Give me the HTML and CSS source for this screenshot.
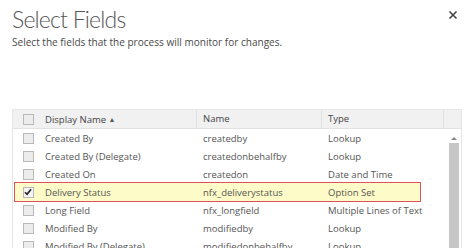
FILE: index.html
```html
<!DOCTYPE html>
<html>
<head>
<meta charset="utf-8">
<link rel="stylesheet" href="styles.css">
</head>
<body>
<div class="dialog">
  <div class="top">
    <h1 class="title">Select Fields</h1>
    <svg class="close" width="10" height="10" viewBox="0 0 10 10"><path d="M1.5 1.5 L8.5 8.5 M8.5 1.5 L1.5 8.5" stroke="#444" stroke-width="1.6"/></svg>
  </div>
  <p class="subtitle">Select the fields that the process will monitor for changes.</p>
  <div class="grid">
    <div class="head row">
      <span class="cb-cell"><span class="cb"></span></span>
      <span class="c-disp">Display Name <span class="sort">&#9650;</span></span>
      <span class="c-name sep">Name</span>
      <span class="c-type sep">Type</span>
      <span class="c-scroll sep"></span>
    </div>
    <div class="body">
      <div class="rows">
        <div class="row"><span class="cb-cell"><span class="cb"></span></span><span class="c-disp">Created By</span><span class="c-name">createdby</span><span class="c-type">Lookup</span></div>
        <div class="row"><span class="cb-cell"><span class="cb"></span></span><span class="c-disp">Created By (Delegate)</span><span class="c-name">createdonbehalfby</span><span class="c-type">Lookup</span></div>
        <div class="row"><span class="cb-cell"><span class="cb"></span></span><span class="c-disp">Created On</span><span class="c-name">createdon</span><span class="c-type">Date and Time</span></div>
        <div class="row hl"><span class="cb-cell"><span class="cb checked"><svg width="8" height="8" viewBox="0 0 8 8"><path d="M1 4.2 L3.1 6.3 L7 1.2" fill="none" stroke="#222" stroke-width="1.6"/></svg></span></span><span class="c-disp">Delivery Status</span><span class="c-name">nfx_deliverystatus</span><span class="c-type">Option Set</span></div>
        <div class="row"><span class="cb-cell"><span class="cb"></span></span><span class="c-disp">Long Field</span><span class="c-name">nfx_longfield</span><span class="c-type">Multiple Lines of Text</span></div>
        <div class="row"><span class="cb-cell"><span class="cb"></span></span><span class="c-disp">Modified By</span><span class="c-name">modifiedby</span><span class="c-type">Lookup</span></div>
        <div class="row"><span class="cb-cell"><span class="cb"></span></span><span class="c-disp">Modified By (Delegate)</span><span class="c-name">modifiedonbehalfby</span><span class="c-type">Lookup</span></div>
      </div>
      <div class="scrollbar">
        <span class="arrow"></span>
        <span class="track"></span>
      </div>
    </div>
  </div>
</div>
</body>
</html>
```
FILE: styles.css
```css
html, body {
  margin: 0;
  padding: 0;
  background: #fff;
  overflow: hidden;
  height: 248px;
}
body {
  font-family: "Open Sans", "Noto Sans", sans-serif;
  color: #444;
}
.dialog {
  padding: 0 13px 0 12px;
}
.top {
  display: flex;
  justify-content: space-between;
  align-items: flex-start;
}
.title {
  margin: 0;
  padding-top: 5px;
  font-family: "Lato", "Open Sans", sans-serif;
  font-size: 23px;
  font-weight: 300;
  line-height: 28px;
  letter-spacing: -0.8px;
  color: #555;
}
.close {
  margin-top: 10px;
  margin-right: 3px;
}
.subtitle {
  margin: 2px 0 0;
  font-size: 10.05px;
  line-height: 14px;
  color: #4a4a4a;
}
.grid {
  margin-top: 60px;
  width: 448px;
  border: 1px solid #e6e6e6;
  border-bottom: none;
  font-size: 9.5px;
  color: #555;
}
.row {
  display: grid;
  grid-template-columns: 29px 154px 125px 127px;
  align-items: center;
  height: 18px;
  position: relative;
}
.head {
  grid-template-columns: 29px 154px 125px 122px 18px;
  height: 18px;
  background: #f1f1f1;
  border-bottom: 1px solid #e2e2e2;
  color: #444;
}
.sep {
  border-left: 1px solid #e0e0e0;
  height: 18px;
  line-height: 18px;
}
.head .c-name, .head .c-type {
  padding-left: 6px;
}
.head .c-scroll {
  padding-left: 0;
}
.sort {
  font-size: 7px;
  vertical-align: 1px;
  color: #555;
}
.cb-cell {
  display: flex;
  justify-content: center;
  padding-left: 1px;
}
.cb {
  width: 9px;
  height: 9px;
  border: 1px solid #b9b9b9;
  background: #ececec;
  display: flex;
  align-items: center;
  justify-content: center;
  position: relative;
  z-index: 1;
}
.cb.checked {
  background: #f4f4f4;
}
.c-disp {
  padding-left: 3px;
  white-space: nowrap;
}
.c-name, .c-type {
  white-space: nowrap;
  padding-left: 7px;
}
.body {
  display: flex;
}
.rows {
  width: 435px;
}
.rows .row > span {
  position: relative;
  z-index: 1;
}
.hl::before {
  content: "";
  position: absolute;
  left: 1px;
  top: -1px;
  width: 407px;
  height: 20px;
  background: #fdfcc8;
  border: 1px solid #d9535a;
  box-sizing: border-box;
}
.scrollbar {
  width: 11px;
  display: flex;
  flex-direction: column;
  align-items: center;
  padding-top: 8px;
}
.arrow {
  width: 0;
  height: 0;
  border-left: 3px solid transparent;
  border-right: 3px solid transparent;
  border-bottom: 3px solid #888;
}
.track {
  margin-top: 3px;
  width: 10px;
  height: 120px;
  background: #c6c6c6;
}
```
